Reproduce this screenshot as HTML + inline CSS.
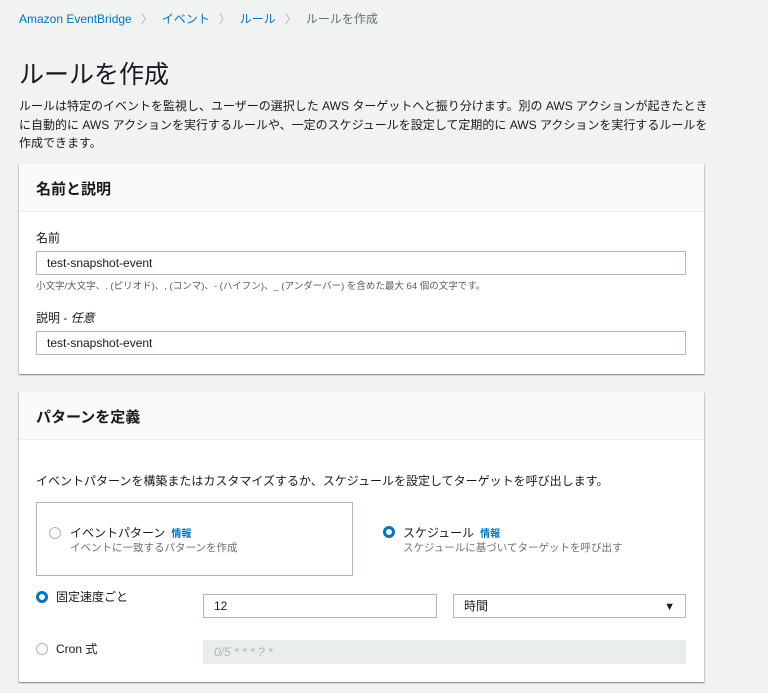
<!DOCTYPE html>
<html><head><meta charset="utf-8"><style>
*{box-sizing:border-box;margin:0;padding:0}
body{width:768px;height:693px;background:#f1f2f2;font-family:"Liberation Sans","Noto Sans CJK JP",sans-serif;color:#16191f;position:relative;overflow:hidden}
.a{position:absolute;white-space:nowrap}
.bc{top:10px;left:19px;font-size:12px;color:#0073bb}
.bc .s{color:#aab7b8;margin:0 9px}
.bc .g{color:#687078}
h1{position:absolute;top:55px;left:19px;font-size:25px;font-weight:400}
.desc{position:absolute;top:97px;left:19px;width:690px;font-size:12px;line-height:18.5px}
.card{position:absolute;left:19px;width:685px;background:#fff;box-shadow:0 1px 1px rgba(0,28,36,.3),1px 1px 1px rgba(0,28,36,.15),-1px 1px 1px rgba(0,28,36,.15)}
.hd{height:48px;background:#fafafa;border-bottom:1px solid #eaeded;font-size:15px;font-weight:700;padding:14px 17px}
.inp{position:absolute;border:1px solid #aab7b8;background:#fff;font-size:12px;line-height:14px;padding:4px 10px;height:24px;border-radius:1px;white-space:nowrap}
.lbl{font-size:12px}
.r{position:absolute;width:12px;height:12px;border-radius:50%;border:1px solid #aab7b8;background:#fff}
.r.on{border:3.5px solid #0073bb}
.info{color:#0073bb;font-size:10px;font-weight:700;margin-left:6px}
.sub{font-size:10.5px;color:#687078}
</style></head><body>
<div class="a bc">Amazon EventBridge<span class="s">〉</span>イベント<span class="s">〉</span>ルール<span class="s">〉</span><span class="g">ルールを作成</span></div>
<h1>ルールを作成</h1>
<div class="desc">ルールは特定のイベントを監視し、ユーザーの選択した AWS ターゲットへと振り分けます。別の AWS アクションが起きたときに自動的に AWS アクションを実行するルールや、一定のスケジュールを設定して定期的に AWS アクションを実行するルールを作成できます。</div>

<div class="card" style="top:164px;height:210px">
<div class="hd">名前と説明</div>
<div class="a lbl" style="left:17px;top:65px">名前</div>
<div class="inp" style="left:17px;top:87px;width:650px">test-snapshot-event</div>
<div class="a" style="left:17px;top:114px;font-size:9.5px;color:#545b64">小文字/大文字、. (ピリオド)、, (コンマ)、- (ハイフン)、_ (アンダーバー) を含めた最大 64 個の文字です。</div>
<div class="a lbl" style="left:17px;top:145px">説明 - <i>任意</i></div>
<div class="inp" style="left:17px;top:167px;width:650px">test-snapshot-event</div>
</div>

<div class="card" style="top:392px;height:290px">
<div class="hd">パターンを定義</div>
<div class="a lbl" style="left:17px;top:80px">イベントパターンを構築またはカスタマイズするか、スケジュールを設定してターゲットを呼び出します。</div>
<div class="a" style="left:17px;top:110px;width:317px;height:74px;border:1px solid #aab7b8"></div>
<div class="r" style="left:30px;top:135px"></div>
<div class="a lbl" style="left:51px;top:132px">イベントパターン<span class="info">情報</span></div>
<div class="a sub" style="left:51px;top:148px">イベントに一致するパターンを作成</div>
<div class="r on" style="left:364px;top:134px"></div>
<div class="a lbl" style="left:384px;top:132px">スケジュール<span class="info">情報</span></div>
<div class="a sub" style="left:384px;top:148px">スケジュールに基づいてターゲットを呼び出す</div>
<div class="r on" style="left:17px;top:199px"></div>
<div class="a lbl" style="left:37px;top:196px">固定速度ごと</div>
<div class="inp" style="left:184px;top:202px;width:234px">12</div>
<div class="inp" style="left:434px;top:202px;width:233px">時間<span style="position:absolute;right:10px;top:5px;font-size:11px">▼</span></div>
<div class="r" style="left:17px;top:251px"></div>
<div class="a lbl" style="left:37px;top:248px">Cron 式</div>
<div class="inp" style="left:184px;top:248px;width:483px;background:#eaeded;border-color:#eaeded;color:#aab7b8;font-style:italic">0/5 * * * ? *</div>
</div>
</body></html>
